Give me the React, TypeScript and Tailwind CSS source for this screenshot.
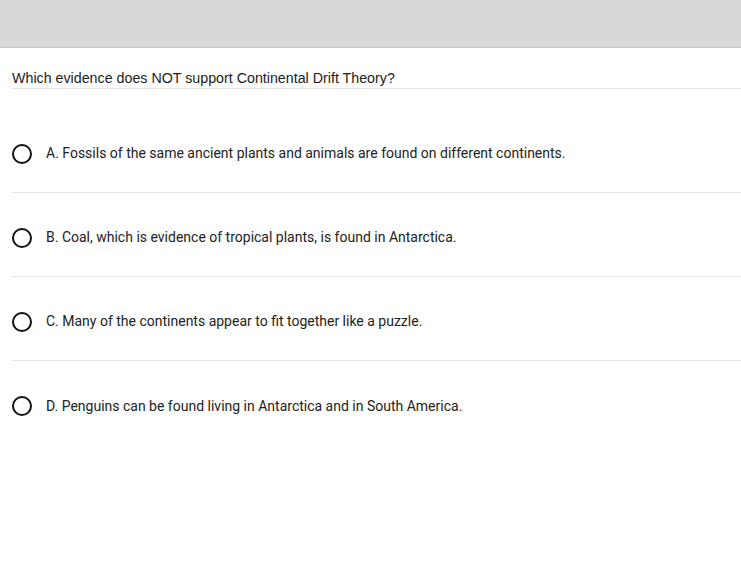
import React from "react";

const options = [
  "A. Fossils of the same ancient plants and animals are found on different continents.",
  "B. Coal, which is evidence of tropical plants, is found in Antarctica.",
  "C. Many of the continents appear to fit together like a puzzle.",
  "D. Penguins can be found living in Antarctica and in South America.",
];

export default function App() {
  return (
    <div className="w-[741px] h-[587px] bg-white overflow-hidden">
      {/* top bar */}
      <div className="h-[48px] bg-[#d8d8d8] border-b border-[#c4c4c4]" />

      <div className="pl-[12px]">
        <div className="pt-[23px] pb-[2px] border-b border-[#e4e4e4]">
          <p className="text-[14.25px] leading-[15px] text-[#1c1c1c] font-['Liberation_Sans',Arial,sans-serif]">
            Which evidence does NOT support Continental Drift Theory?
          </p>
        </div>

        <ul className="mt-[20px]">
          {options.map((opt, i) => (
            <li
              key={i}
              className={
                "h-[84px] flex items-center pt-[6px] " +
                (i < options.length - 1 ? "border-b border-[#e4e4e4]" : "")
              }
            >
              <span className="w-[20px] h-[20px] rounded-full border-2 border-[#111] shrink-0" />
              <span className="ml-[14px] text-[14px] leading-[19px] text-[#222] font-['Roboto',sans-serif]">
                {opt}
              </span>
            </li>
          ))}
        </ul>
      </div>
    </div>
  );
}
